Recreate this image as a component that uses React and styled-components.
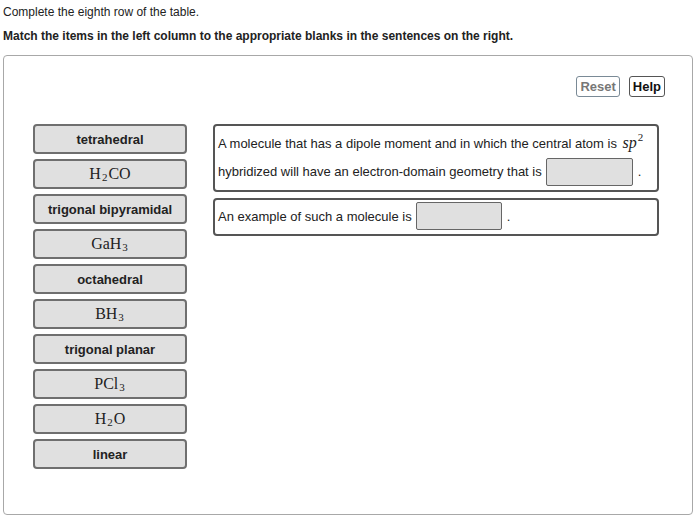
import styled, { createGlobalStyle } from "styled-components";

const Global = createGlobalStyle`
  body {
    margin: 0;
    background: #fff;
    font-family: "Liberation Sans", Arial, sans-serif;
    color: #222;
  }
`;

const Page = styled.div`
  width: 697px;
  height: 517px;
  padding: 5px 4px 0 3px;
  box-sizing: border-box;
`;

const Intro = styled.p`
  margin: 0;
  font-size: 12px;
  line-height: 15px;
  font-weight: ${(props) => (props.bold ? "bold" : "normal")};
  margin-bottom: ${(props) => props.gap || 0}px;
`;

const Panel = styled.div`
  margin-top: 11px;
  height: 460px;
  border: 1px solid #a8a8a8;
  border-radius: 4px;
  box-sizing: border-box;
  padding: 20px 26px 0 29px;
`;

const Toolbar = styled.div`
  display: flex;
  justify-content: flex-end;
  gap: 9px;
  margin-bottom: 26px;
  padding-right: 1px;
`;

const ToolButton = styled.button`
  font-family: "Liberation Sans", Arial, sans-serif;
  font-weight: bold;
  font-size: 13px;
  height: 21px;
  padding: 0 3px;
  background: #fff;
  border: 1px solid ${(props) => (props.dim ? "#7a8a96" : "#555")};
  border-radius: 3px;
  color: ${(props) => (props.dim ? "#777" : "#111")};
`;

const Board = styled.div`
  display: flex;
  gap: 26px;
`;

const Items = styled.div`
  display: flex;
  flex-direction: column;
  gap: 5px;
  width: 154px;
  padding-top: 1px;
`;

const Item = styled.div`
  height: 30px;
  box-sizing: border-box;
  border: 2px solid #6f6f6f;
  border-radius: 4px;
  background: #e0e0e0;
  display: flex;
  align-items: center;
  justify-content: center;
  color: #222;
`;

const Label = styled.span`
  font-size: 13px;
  font-weight: bold;
`;

const Formula = styled.span`
  font-family: "Liberation Serif", "Times New Roman", serif;
  font-size: 16px;
  sub {
    font-size: 11px;
    vertical-align: -2px;
    line-height: 0;
    margin: 0 1px;
  }
`;

const Sentences = styled.div`
  display: flex;
  flex-direction: column;
  gap: 6px;
  width: 446px;
  padding-top: 1px;
`;

const Sentence = styled.div`
  border: 2px solid #555;
  border-radius: 4px;
  padding: 3px;
  font-size: 13px;
  line-height: 28px;
  color: #222;
`;

const Blank = styled.span`
  display: inline-block;
  vertical-align: middle;
  width: ${(props) => props.w}px;
  height: 28px;
  box-sizing: border-box;
  border: 1px solid #666;
  border-radius: 2px;
  background: #e0e0e0;
  margin: 0 0 0 4px;
  position: relative;
  top: -1px;
`;

const Math = styled.span`
  font-family: "Liberation Serif", "Times New Roman", serif;
  font-style: italic;
  font-size: 16px;
  margin-left: 2px;
  sup {
    font-style: normal;
    font-size: 11px;
    vertical-align: 7px;
    line-height: 0;
    margin-left: 1px;
  }
`;

const Dot = styled.span`
  margin-left: 5px;
`;

const items = [
  { t: "tetrahedral" },
  { f: ["H", "2", "CO"] },
  { t: "trigonal bipyramidal" },
  { f: ["GaH", "3", ""] },
  { t: "octahedral" },
  { f: ["BH", "3", ""] },
  { t: "trigonal planar" },
  { f: ["PCl", "3", ""] },
  { f: ["H", "2", "O"] },
  { t: "linear" },
];

export default function App() {
  return (
    <Page>
      <Global />
      <Intro gap={9}>Complete the eighth row of the table.</Intro>
      <Intro bold>
        Match the items in the left column to the appropriate blanks in the
        sentences on the right.
      </Intro>
      <Panel>
        <Toolbar>
          <ToolButton dim>Reset</ToolButton>
          <ToolButton>Help</ToolButton>
        </Toolbar>
        <Board>
          <Items>
            {items.map((it, i) => (
              <Item key={i}>
                {it.t ? (
                  <Label>{it.t}</Label>
                ) : (
                  <Formula>
                    {it.f[0]}
                    <sub>{it.f[1]}</sub>
                    {it.f[2]}
                  </Formula>
                )}
              </Item>
            ))}
          </Items>
          <Sentences>
            <Sentence>
              A molecule that has a dipole moment and in which the central atom
              is{" "}
              <Math>
                sp<sup>2</sup>
              </Math>
              <br />
              hybridized will have an electron-domain geometry that is
              <Blank w={87} />
              <Dot>.</Dot>
            </Sentence>
            <Sentence>
              An example of such a molecule is
              <Blank w={86} />
              <Dot>.</Dot>
            </Sentence>
          </Sentences>
        </Board>
      </Panel>
    </Page>
  );
}
